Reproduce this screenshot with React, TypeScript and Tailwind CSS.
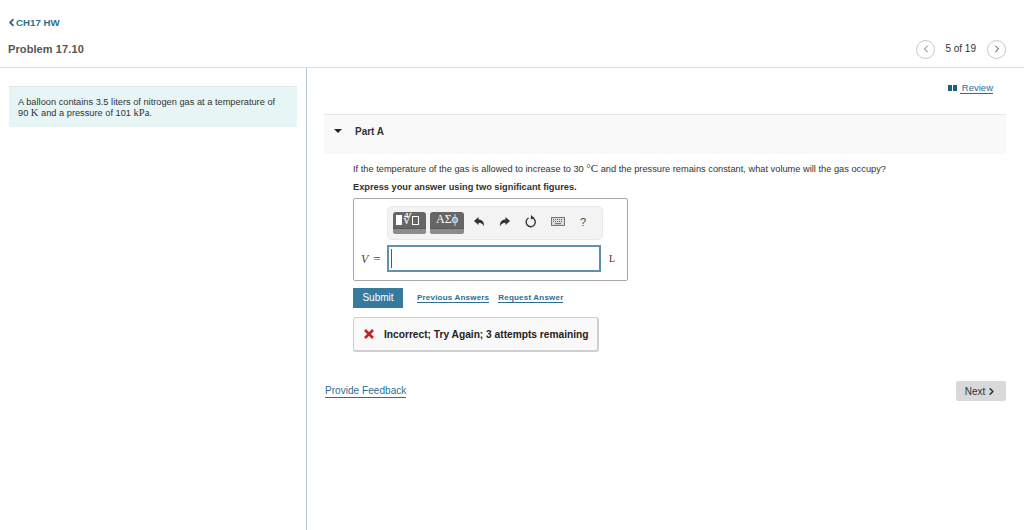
import { ChevronLeft, ChevronRight } from "lucide-react";

const serif = "font-['Liberation_Serif',serif]";

const Undo = () => (
  <svg width="11" height="10" viewBox="0 0 11 10" className="text-[#333]">
    <path d="M0 4 L4.5 0 V2.4 C8 2.4 10.5 4.5 10 9.5 C9 7 7.5 5.8 4.5 5.8 V8 Z" fill="currentColor" />
  </svg>
);

const Redo = () => (
  <svg width="11" height="10" viewBox="0 0 11 10" className="text-[#333]">
    <path d="M11 4 L6.5 0 V2.4 C3 2.4 0.5 4.5 1 9.5 C2 7 3.5 5.8 6.5 5.8 V8 Z" fill="currentColor" />
  </svg>
);

const Reset = () => (
  <svg width="12" height="13" viewBox="0 0 12 13" fill="none" className="text-[#333]">
    <path d="M7.6 2.9 A4.6 4.6 0 1 1 3.6 3" stroke="currentColor" strokeWidth="1.4" />
    <path d="M6 0 L9.4 2.9 L5.8 4.6 Z" fill="currentColor" />
  </svg>
);

const Keyboard = () => (
  <svg width="14" height="9" viewBox="0 0 14 9">
    <rect x="0.5" y="0.5" width="13" height="8" fill="#ddd" stroke="#777" />
    <path d="M2 2.5 H12 M2 4.5 H12" stroke="#666" strokeDasharray="1 1" />
    <path d="M4 6.7 H10" stroke="#666" />
  </svg>
);

const ToolButton = ({ children }: { children: React.ReactNode }) => (
  <div className="h-[22px] rounded-[3px] bg-[#666] overflow-hidden flex flex-col">
    <div className="h-[16px] px-[3px] flex items-start text-white">{children}</div>
    <div className="flex-1 bg-[#8c8c8c] border-t border-[#5a5a5a]" />
  </div>
);

const PageButton = ({ children }: { children: React.ReactNode }) => (
  <div className="w-[19px] h-[19px] rounded-full border border-[#c8c8c8] flex items-center justify-center text-[#444]">
    {children}
  </div>
);

export default function App() {
  return (
    <div className="w-[1024px] h-[530px] bg-white flex flex-col font-['Liberation_Sans',Arial,sans-serif] text-[#333] overflow-hidden">
      <header className="h-[68px] shrink-0 border-b border-[#dcdfe3] pl-[8px] pr-[18px] flex flex-col">
        <a className="mt-[16px] h-[13px] flex items-center text-[9.7px] leading-[13px] font-bold text-[#2d6f93]">
          <ChevronLeft size={11} strokeWidth={4} className="-ml-[2px] -mr-[1px]" />
          <span>CH17 HW</span>
        </a>
        <div className="mt-[10px] flex items-center justify-between">
          <h1 className="text-[11px] font-bold text-[#555] leading-[20px] tracking-[0.1px]">Problem 17.10</h1>
          <div className="flex items-center text-[10px] leading-[20px]">
            <PageButton><ChevronLeft size={12} strokeWidth={1.5} /></PageButton>
            <span className="ml-[10px] mr-[11px]">5 of 19</span>
            <PageButton><ChevronRight size={12} strokeWidth={2} /></PageButton>
          </div>
        </div>
      </header>

      <div className="flex flex-1 min-h-0">
        <aside className="w-[307px] shrink-0 border-r border-[#b9c8d6] pl-[9px] pr-[9px] pt-[18px]">
          <div className="h-[41px] bg-[#e8f5f5] border-t border-[#dfe5e8] px-[9px] pt-[10px] text-[9.25px] leading-[11px] text-[#333]">
            A balloon contains 3.5 liters of nitrogen gas at a temperature of
            <br />
            90 <span className={`${serif} text-[10.5px] leading-none`}>K</span> and a pressure of 101 <span className={`${serif} text-[10.5px] leading-none`}>kPa</span>.
          </div>
        </aside>

        <main className="flex-1 pl-[17px] pr-[18px] flex flex-col">
          <div className="h-[46px] shrink-0 pt-[14px] pr-[13px] flex justify-end items-start gap-[3px]">
            <span className="flex gap-[1px] mt-[3px]">
              <span className="w-[4px] h-[6px] bg-[#1f5f80]" />
              <span className="w-[4px] h-[6px] bg-[#1f5f80]" />
            </span>
            <a className="h-[12px] pl-[2px] border-b border-[#2d6f93] text-[9.5px] leading-[11px] text-[#2d6f93]">Review</a>
          </div>

          <section className="h-[40px] shrink-0 bg-[#f9f9f9] border-t border-[#e6e6e6] flex items-center pl-[10px] pb-[7px]">
            <span className="w-0 h-0 border-x-[4px] border-x-transparent border-t-[4px] border-t-[#222]" />
            <h2 className="ml-[13px] text-[10px] font-bold text-[#333]">Part A</h2>
          </section>

          <div className="pl-[29px] flex flex-col items-start">
            <p className="mt-[8px] h-[14px] text-[9.28px] leading-[14px] text-[#333] whitespace-nowrap">
              If the temperature of the gas is allowed to increase to 30 <span className={`${serif} text-[11px] leading-none`}>°C</span> and the pressure remains constant, what volume will the gas occupy?
            </p>
            <p className="mt-[4px] h-[14px] text-[9.25px] leading-[14px] font-bold text-[#333]">
              Express your answer using two significant figures.
            </p>

            <div className="mt-[4px] w-[275px] h-[83px] border border-[#a8a8a8] rounded-[2px] flex flex-col">
              <div className="mt-[7px] ml-[33px] w-[216px] h-[34px] bg-[#f3f3f3] border border-[#e8e8e8] rounded-[5px] flex items-center pl-[5px]">
                <ToolButton>
                  <div className="w-[27px] flex items-center gap-[1px] pt-[2px]">
                    <span className="w-[6px] h-[10px] bg-white" />
                    <span className={`${serif} text-[13px] leading-[12px]`}>∜</span>
                    <span className="w-[7px] h-[9px] border border-white" />
                  </div>
                </ToolButton>
                <div className="ml-[4px]">
                  <ToolButton>
                    <span className={`${serif} w-[28px] text-[12px] leading-[14px] text-center`}>ΑΣϕ</span>
                  </ToolButton>
                </div>
                <div className="ml-[10px] mb-[3px] flex items-center w-[112px] justify-between">
                  <Undo />
                  <Redo />
                  <Reset />
                  <Keyboard />
                  <span className="text-[11px] text-[#444] leading-[12px]">?</span>
                </div>
              </div>

              <div className="mt-[5px] flex items-center">
                <span className={`${serif} w-[33px] pl-[7px] text-[12px] whitespace-nowrap text-[#444]`}>
                  <i>V</i>
                  <span className="ml-[5px] text-[13px]">=</span>
                </span>
                <div className="w-[214px] h-[27px] border-2 border-[#5f93ab] flex items-center pl-[2px]">
                  <span className="w-[1px] h-[19px] bg-[#3a55c0]" />
                </div>
                <span className={`${serif} ml-[8px] text-[10px] text-[#333]`}>L</span>
              </div>
            </div>

            <div className="mt-[7px] flex items-center">
              <button className="w-[50px] h-[20px] bg-[#377a9f] text-white text-[10px] leading-[20px] text-center">Submit</button>
              <a className="ml-[14px] text-[8px] font-bold text-[#2d6f93] border-b border-[#2d6f93] leading-[9px] tracking-[0.2px]">Previous Answers</a>
              <a className="ml-[9px] text-[8px] font-bold text-[#2d6f93] border-b border-[#2d6f93] leading-[9px] tracking-[0.2px]">Request Answer</a>
            </div>

            <div className="mt-[9px] w-[246px] h-[35px] bg-[#f9f9f9] border border-[#cfcfcf] border-b-2 border-r-2 rounded-[3px] flex items-center pl-[10px]">
              <svg width="10" height="10" viewBox="0 0 10 10">
                <path d="M1 1 L9 9 M9 1 L1 9" stroke="#c5202c" strokeWidth="2.6" />
              </svg>
              <span className="ml-[10px] pt-[2px] text-[10.2px] font-bold text-[#222] whitespace-nowrap">Incorrect; Try Again; 3 attempts remaining</span>
            </div>
          </div>

          <div className="mt-[29px] flex items-center justify-between">
            <a className="ml-[1px] text-[10.1px] leading-[12px] text-[#2d6f93] border-b border-[#2d6f93]">Provide Feedback</a>
            <button className="w-[50px] h-[20px] bg-[#d9d9d9] rounded-[2px] text-[10px] text-[#333] flex items-center justify-center gap-[1px]">
              Next <ChevronRight size={11} strokeWidth={3.5} />
            </button>
          </div>
        </main>
      </div>
    </div>
  );
}
